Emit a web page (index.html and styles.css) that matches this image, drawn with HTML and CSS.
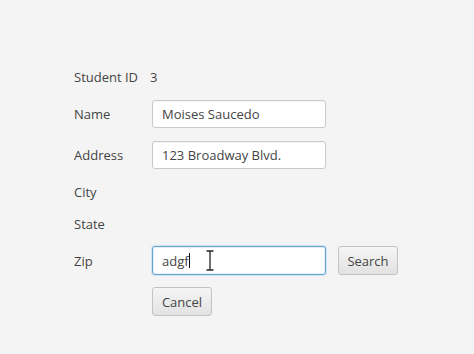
FILE: index.html
```html
<!DOCTYPE html>
<html>
<head>
<meta charset="utf-8">
<link rel="stylesheet" href="styles.css">
</head>
<body>
<div class="form">
  <div class="cell r1 lbl">Student ID</div>
  <div class="cell r1 val">3</div>

  <div class="cell r2 lbl">Name</div>
  <div class="cell r2 field"><span class="input">Moises Saucedo</span></div>

  <div class="cell r3 lbl">Address</div>
  <div class="cell r3 field"><span class="input">123 Broadway Blvd.</span></div>

  <div class="cell r4 lbl">City</div>
  <div class="cell r5 lbl">State</div>

  <div class="cell r6 lbl">Zip</div>
  <div class="cell r6 field"><span class="input focused">adgf<span class="caret"></span>
    <svg class="ibeam" width="10" height="21" viewBox="0 0 10 21"><path d="M1.5 1h7M5 1v19M1.5 20h7" stroke="#222" stroke-width="1.3" fill="none"/></svg></span></div>
  <div class="cell r6 btncell"><span class="btn">Search</span></div>

  <div class="cell r7 field"><span class="btn">Cancel</span></div>
</div>
</body>
</html>
```
FILE: styles.css
```css
html, body {
  margin: 0;
  background: #f4f4f4;
}
body {
  width: 474px;
  height: 354px;
  overflow: hidden;
  font-family: "Open Sans", "Noto Sans", sans-serif;
  font-size: 13px;
  color: #444;
}
.form {
  display: grid;
  grid-template-columns: 78px 174px 12px 60px;
  grid-template-rows: 35px 41px 39px 32px 34px 41px 29px;
  padding: 65px 0 0 74px;
}
.cell {
  display: flex;
  align-items: center;
}
.r1, .r4, .r5 { height: 24px; }
.r2, .r3 { height: 28px; }
.r6, .r7 { height: 29px; }
.r1 { grid-row: 1; }
.r2 { grid-row: 2; }
.r3 { grid-row: 3; }
.r4 { grid-row: 4; }
.r5 { grid-row: 5; }
.r6 { grid-row: 6; }
.r7 { grid-row: 7; }
.lbl { grid-column: 1; }
.val, .field { grid-column: 2; }
.val { margin-left: -2px; }
.btncell { grid-column: 4; }
.input {
  box-sizing: border-box;
  width: 174px;
  height: 100%;
  display: flex;
  align-items: center;
  padding-left: 9px;
  background: #fff;
  border: 1px solid #c9c9c9;
  border-radius: 3px;
  position: relative;
  box-shadow: inset 0 1px 1px rgba(0,0,0,0.04);
}
.input.focused {
  border: 1px solid #6aa5cf;
  box-shadow: 0 0 0 1px #cfe3f1, inset 0 0 0 1px #e3eef7;
}
.caret {
  display: inline-block;
  width: 1px;
  height: 15px;
  background: #111;
}
.ibeam {
  position: absolute;
  left: 52px;
  top: 3px;
}
.btn {
  box-sizing: border-box;
  height: 100%;
  width: 60px;
  display: flex;
  align-items: center;
  justify-content: center;
  border: 1px solid #c3c3c3;
  border-radius: 3px;
  background: linear-gradient(#f5f5f5, #e2e2e2);
  color: #444;
}
```
